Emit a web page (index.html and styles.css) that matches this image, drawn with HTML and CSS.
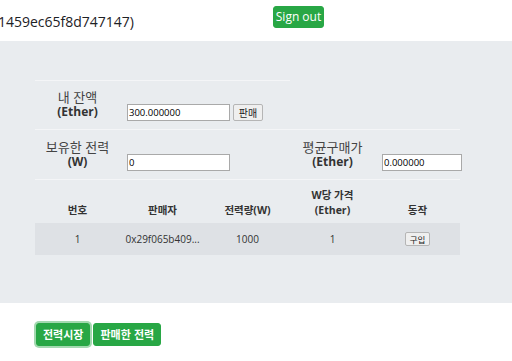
FILE: index.html
```html
<!DOCTYPE html>
<html lang="ko">
<head>
<meta charset="utf-8">
<title>전력시장</title>
<link rel="stylesheet" href="styles.css">
</head>
<body>
<header class="top">
  <div class="title-box"><h1 class="title">1459ec65f8d747147)</h1></div>
  <button class="btn btn-green signout">Sign out</button>
</header>
<main class="jumbo">
  <div class="grid">
    <div class="cell label r1"><span class="ko">내 잔액</span><span class="unit">(Ether)</span></div>
    <div class="cell field r1 span2"><input class="inp" type="text" value="300.000000"><button class="small-btn sell">판매</button></div>

    <div class="cell label r2"><span class="ko">보유한 전력</span><span class="unit">(W)</span></div>
    <div class="cell field r2 span2"><input class="inp" type="text" value="0"></div>
    <div class="cell label r2"><span class="ko">평균구매가</span><span class="unit">(Ether)</span></div>
    <div class="cell field r2"><input class="inp inp-short" type="text" value="0.000000"></div>

    <div class="cell th r3">번호</div>
    <div class="cell th r3">판매자</div>
    <div class="cell th r3">전력량(W)</div>
    <div class="cell th r3">W당 가격<br>(Ether)</div>
    <div class="cell th r3">동작</div>

    <div class="cell td r4">1</div>
    <div class="cell td r4">0x29f065b409...</div>
    <div class="cell td r4">1000</div>
    <div class="cell td r4">1</div>
    <div class="cell td r4"><button class="small-btn buy">구입</button></div>
  </div>
</main>
<nav class="bottom">
  <button class="btn btn-green active">전력시장</button>
  <button class="btn btn-green">판매한 전력</button>
</nav>
</body>
</html>
```

FILE: styles.css
```css
* { box-sizing: border-box; }
html, body { margin: 0; padding: 0; background: #fff; }
body {
  font-family: "Open Sans", "Noto Sans CJK KR", sans-serif;
  color: #212529;
  width: 512px;
  height: 361px;
  overflow: hidden;
}
.top {
  height: 41px;
  display: flex;
  align-items: flex-start;
}
.title-box {
  width: 134px;
  display: flex;
  justify-content: flex-end;
  overflow: hidden;
  flex: none;
}
.title {
  margin: 12px 0 0 0;
  font-size: 14px;
  font-weight: 500;
  line-height: 20px;
  white-space: nowrap;
  color: #1d2125;
}
.btn {
  font-family: "Open Sans", "Noto Sans CJK KR", sans-serif;
  border: 1px solid #28a745;
  background: #28a745;
  color: #fff;
  border-radius: 3px;
  cursor: pointer;
}
.signout {
  margin: 6px 0 0 139px;
  width: 51px;
  height: 22px;
  font-size: 12px;
  padding: 0;
  line-height: 20px;
}
.jumbo {
  background: #e9ecef;
  padding: 39px 0 48px 35px;
}
.grid {
  display: grid;
  grid-template-columns: repeat(5, 85px);
  grid-template-rows: 49px 50px 44px 32px;
  width: 425px;
}
.cell { border-top: 1px solid #f4f5f7; }
.r1 { grid-row: 1; }
.r2 { grid-row: 2; }
.r3 { grid-row: 3; }
.r4 { grid-row: 4; }
.span2 { grid-column: span 2; }
.label {
  display: flex;
  flex-direction: column;
  align-items: center;
  padding-top: 8px;
  line-height: 15px;
}
.ko { font-size: 13px; color: #444; font-family: "Noto Sans CJK KR", sans-serif; }
.unit { font-size: 12px; font-weight: 700; color: #333; }
.r2.label { padding-top: 9px; }
.field {
  display: flex;
  align-items: flex-start;
  gap: 3px;
  padding: 23px 0 0 7px;
}
.r2.field { padding-top: 24px; }
.inp {
  width: 103px;
  height: 17px;
  border: 1px solid #a9a9a9;
  background: #fff;
  font-family: "Open Sans", sans-serif;
  font-size: 9.5px;
  padding: 0 1px;
  color: #000;
  outline: none;
  flex: none;
}
.inp-short { width: 80px; }
.small-btn {
  font-family: "Noto Sans CJK KR", sans-serif;
  background: #efefef;
  border: 1px solid #b5b5b5;
  border-radius: 2px;
  color: #222;
  padding: 0;
  cursor: pointer;
}
.sell { width: 30px; height: 17px; font-size: 10px; line-height: 15px; }
.buy { width: 25px; height: 14px; font-size: 8.5px; line-height: 12px; }
.th {
  display: flex;
  align-items: flex-end;
  justify-content: center;
  text-align: center;
  font-weight: 700;
  font-size: 10.5px;
  line-height: 15px;
  color: #333;
  padding-bottom: 5px;
}
.td {
  background: #dee1e5;
  display: flex;
  align-items: center;
  justify-content: center;
  font-size: 10px;
  color: #333;
  border-top: none;
}
.bottom {
  display: flex;
  gap: 3px;
  padding: 20px 0 0 35px;
}
.bottom .btn {
  height: 23px;
  font-size: 11px;
  font-weight: 700;
  padding: 0 6px;
  line-height: 21px;
  font-family: "Noto Sans CJK KR", sans-serif;
}
.bottom .active {
  box-shadow: 0 0 0 2px rgba(72, 180, 97, 0.5);
  margin-left: 1px;
}
```
